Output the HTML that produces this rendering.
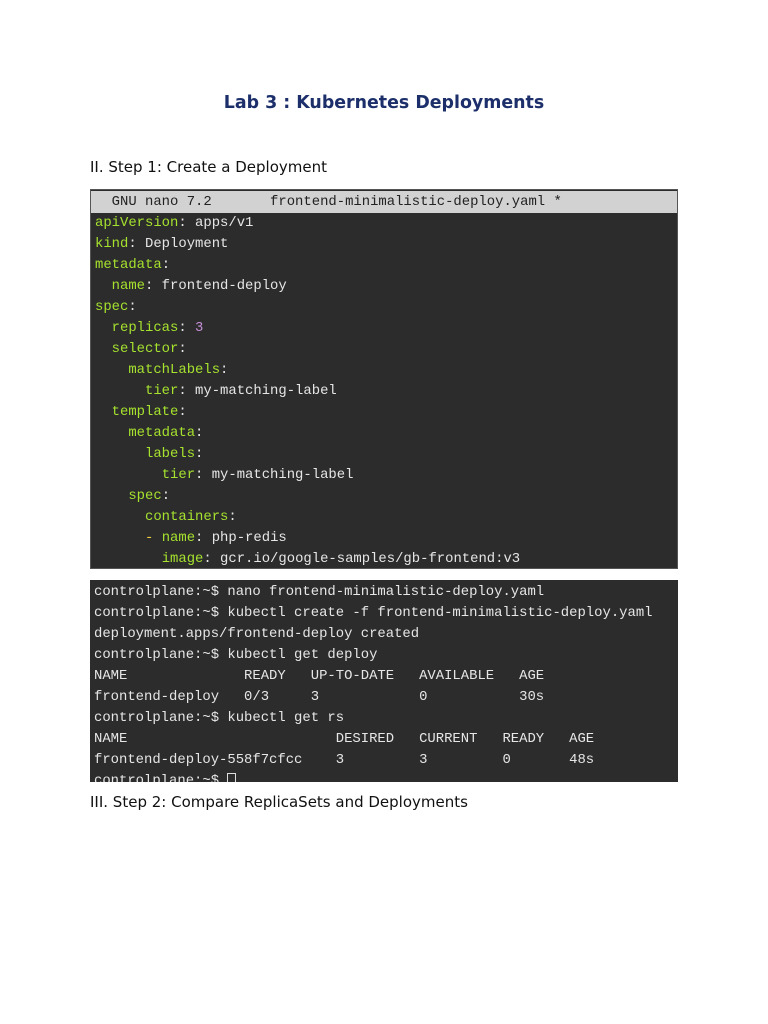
<!DOCTYPE html>
<html><head><meta charset="utf-8"><style>
body{margin:0;width:768px;height:1024px;background:#fff;position:relative;overflow:hidden}
.t{position:absolute;font-family:"DejaVu Sans",sans-serif}
.term{position:absolute;left:90px;width:588px;background:#2c2c2c;overflow:hidden;font-family:"Liberation Mono",monospace;font-size:13.9px;color:#e6e6e6}
.term div{position:absolute;left:4px;white-space:pre;line-height:21px;height:21px}
.g{color:#a6e22e}.p{color:#c38fd6}
.term div.hdr{position:absolute;left:0;top:1px;width:586px;height:22px;background:#d2d2d2;color:#222}
</style></head><body>
<div class="t" style="left:0;width:768px;top:93px;text-align:center;font-weight:bold;font-size:17.4px;color:#1c2f6b">Lab 3 : Kubernetes Deployments</div>
<div class="t" style="left:90px;top:158px;font-size:15px;color:#111">II. Step 1: Create a Deployment</div>

<div class="term" style="top:189px;height:380px;border:1px solid #555;box-sizing:border-box">
<div class="hdr"></div>
<div style="top:2px;color:#222">  GNU nano 7.2       frontend-minimalistic-deploy.yaml *</div>
<div style="top:23px"><span class="g">apiVersion</span>: apps/v1</div>
<div style="top:44px"><span class="g">kind</span>: Deployment</div>
<div style="top:65px"><span class="g">metadata</span>:</div>
<div style="top:86px">  <span class="g">name</span>: frontend-deploy</div>
<div style="top:107px"><span class="g">spec</span>:</div>
<div style="top:128px">  <span class="g">replicas</span>: <span class="p">3</span></div>
<div style="top:149px">  <span class="g">selector</span>:</div>
<div style="top:170px">    <span class="g">matchLabels</span>:</div>
<div style="top:191px">      <span class="g">tier</span>: my-matching-label</div>
<div style="top:212px">  <span class="g">template</span>:</div>
<div style="top:233px">    <span class="g">metadata</span>:</div>
<div style="top:254px">      <span class="g">labels</span>:</div>
<div style="top:275px">        <span class="g">tier</span>: my-matching-label</div>
<div style="top:296px">    <span class="g">spec</span>:</div>
<div style="top:317px">      <span class="g">containers</span>:</div>
<div style="top:338px">      <span style="color:#f0d040">-</span> <span class="g">name</span>: php-redis</div>
<div style="top:359px">        <span class="g">image</span>: gcr.io/google-samples/gb-frontend:v3</div>
</div>

<div class="term" style="top:580px;height:202px">
<div style="top:2px">controlplane:~$ nano frontend-minimalistic-deploy.yaml</div>
<div style="top:23px">controlplane:~$ kubectl create -f frontend-minimalistic-deploy.yaml</div>
<div style="top:44px">deployment.apps/frontend-deploy created</div>
<div style="top:65px">controlplane:~$ kubectl get deploy</div>
<div style="top:86px">NAME              READY   UP-TO-DATE   AVAILABLE   AGE</div>
<div style="top:107px">frontend-deploy   0/3     3            0           30s</div>
<div style="top:128px">controlplane:~$ kubectl get rs</div>
<div style="top:149px">NAME                         DESIRED   CURRENT   READY   AGE</div>
<div style="top:170px">frontend-deploy-558f7cfcc    3         3         0       48s</div>
<div style="top:191px">controlplane:~$ <span style="display:inline-block;width:7px;height:13px;border:1px solid #ddd;vertical-align:middle"></span></div>
</div>

<div class="t" style="left:90px;top:793px;font-size:15px;color:#111">III. Step 2: Compare ReplicaSets and Deployments</div>
</body></html>
